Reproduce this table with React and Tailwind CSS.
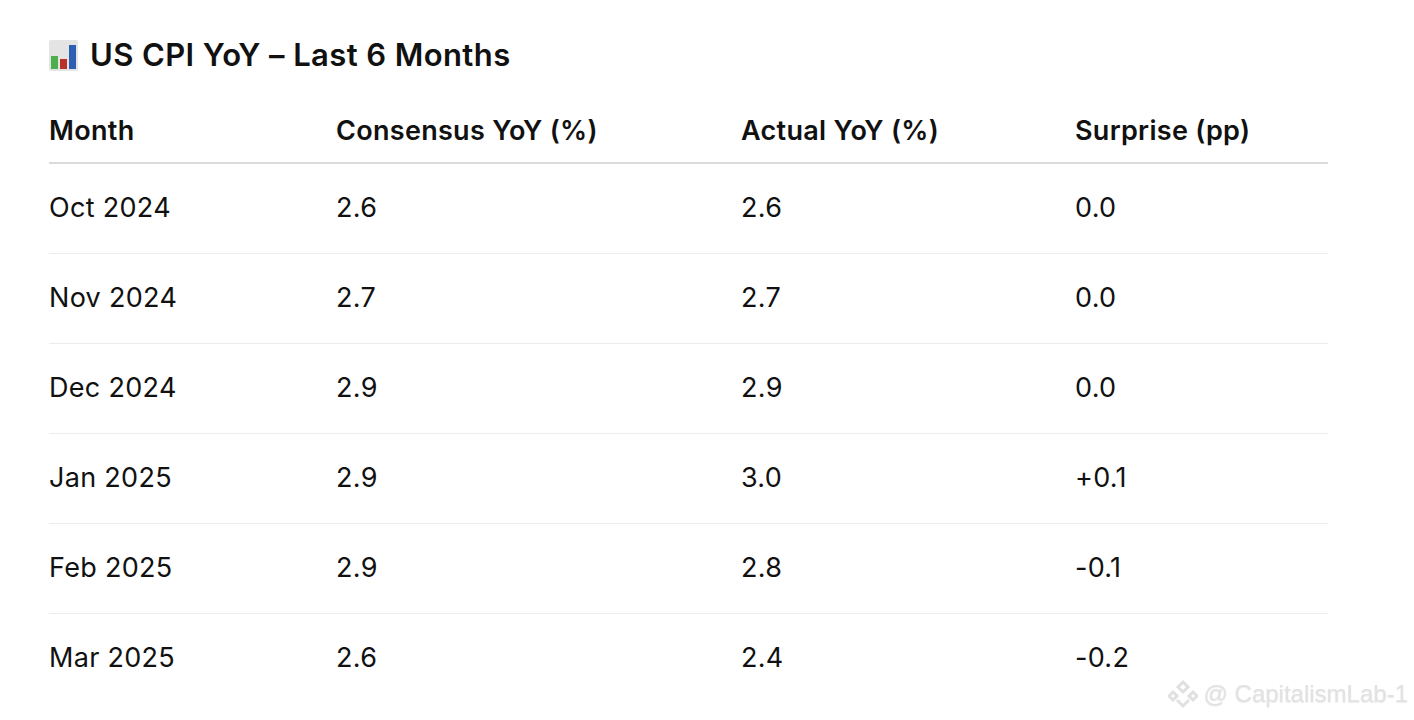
const rows = [
  ['Oct 2024', '2.6', '2.6', '0.0'],
  ['Nov 2024', '2.7', '2.7', '0.0'],
  ['Dec 2024', '2.9', '2.9', '0.0'],
  ['Jan 2025', '2.9', '3.0', '+0.1'],
  ['Feb 2025', '2.9', '2.8', '-0.1'],
  ['Mar 2025', '2.6', '2.4', '-0.2'],
];

function ChartEmoji() {
  return (
    <svg width="29" height="31" viewBox="0 0 29 31" className="shrink-0">
      <rect x="0" y="0" width="29" height="31" rx="2" fill="#e4e4e4" />
      <rect x="2" y="16" width="7" height="13" fill="#4cae4c" />
      <rect x="11" y="19" width="7" height="10" fill="#b8322a" />
      <rect x="20" y="5" width="7" height="24" fill="#2f5fb3" />
    </svg>
  );
}

export default function App() {
  return (
    <div className="relative h-[720px] w-[1414px] overflow-hidden bg-white text-[#111] font-['Inter',sans-serif]">
      <div className="pl-[49px] pt-[36px]">
        <h1 className="flex items-center gap-[12px] text-[31px] font-semibold leading-[38px] tracking-[0.4px]">
          <ChartEmoji />
          <span>US CPI YoY – Last 6 Months</span>
        </h1>

        <table className="mt-[37px] w-[1279px] table-fixed border-collapse text-left text-[27px] tracking-[0.3px]">
          <colgroup>
            <col className="w-[287px]" />
            <col className="w-[405px]" />
            <col className="w-[334px]" />
            <col className="w-[253px]" />
          </colgroup>
          <thead>
            <tr className="border-b-2 border-[#dadada]">
              <th className="h-[52px] align-top font-semibold">Month</th>
              <th className="h-[52px] align-top font-semibold">Consensus YoY (%)</th>
              <th className="h-[52px] align-top font-semibold">Actual YoY (%)</th>
              <th className="h-[52px] align-top font-semibold">Surprise (pp)</th>
            </tr>
          </thead>
          <tbody>
            {rows.map((r, i) => (
              <tr key={r[0]} className={i < rows.length - 1 ? 'border-b border-[#ececec]' : ''}>
                {r.map((c, j) => (
                  <td key={j} className="h-[90px] align-middle font-normal">
                    {c}
                  </td>
                ))}
              </tr>
            ))}
          </tbody>
        </table>
      </div>

      <div className="absolute bottom-[8px] right-[6px] flex items-center gap-[6px] text-[24px] text-[#e2e2e2] [text-shadow:0_1px_1px_rgba(0,0,0,0.08)] font-['Liberation_Sans',sans-serif]">
        <svg width="30" height="30" viewBox="0 0 30 30" fill="none" stroke="#e0e0e0" strokeWidth="3">
          <path d="M15 3 L20 8 L15 13 L10 8 Z" />
          <path d="M5 13 L9 17 L5 21 L1 17 Z" />
          <path d="M25 13 L29 17 L25 21 L21 17 Z" />
          <path d="M9 21 L15 27 L21 21" />
        </svg>
        <span>@ CapitalismLab-1</span>
      </div>
    </div>
  );
}
